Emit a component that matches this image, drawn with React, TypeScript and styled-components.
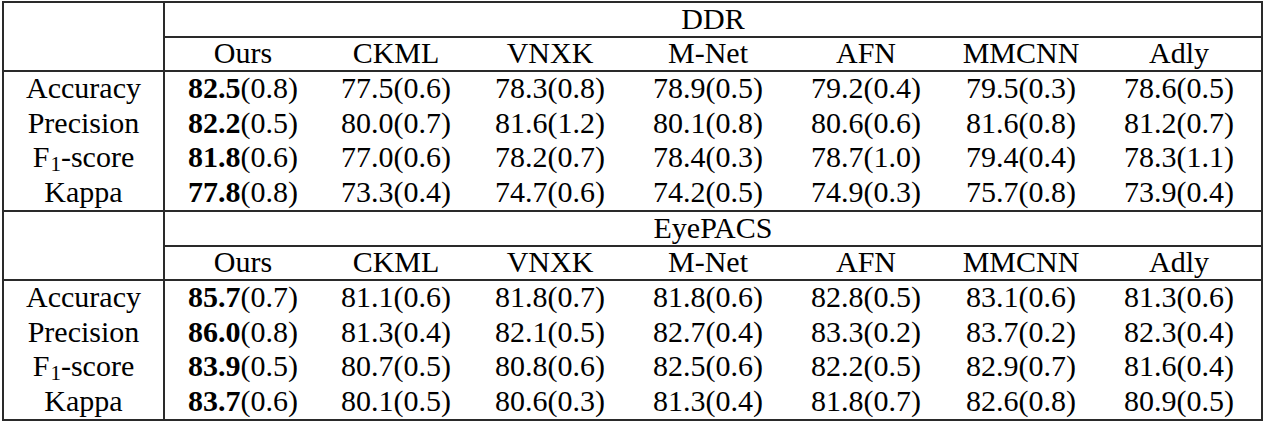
import React from "react";
import styled, { createGlobalStyle } from "styled-components";

const GlobalStyle = createGlobalStyle`
  html, body {
    margin: 0;
    padding: 0;
    background: #ffffff;
  }
  body {
    font-family: "Liberation Serif", "Times New Roman", serif;
    color: #000;
  }
`;

const LINE = "2px solid #2a2a2a";

const Page = styled.div`
  padding: 1px 0 0 2px;
`;

const Table = styled.table`
  width: 1261px;
  table-layout: fixed;
  border-collapse: separate;
  border-spacing: 0;
  border: ${LINE};
  font-family: "Liberation Serif", "Times New Roman", serif;
  font-size: 30px;
  color: #000;
`;

const Col = styled.col<{ $w: number }>`
  width: ${(p) => p.$w}px;
`;

const Row = styled.tr<{ $h: number }>`
  height: ${(p) => p.$h}px;
`;

const LabelCell = styled.td<{ $ruled?: boolean }>`
  box-sizing: border-box;
  padding: 0 0 2px 0;
  text-align: center;
  vertical-align: middle;
  white-space: nowrap;
  border-right: ${LINE};
  border-bottom: ${(p) => (p.$ruled ? LINE : "none")};
  line-height: 1;
`;

const GroupCell = styled.td`
  box-sizing: border-box;
  padding: 0 0 2px 0;
  text-align: center;
  vertical-align: middle;
  border-bottom: ${LINE};
  line-height: 1;
`;

const Cell = styled.td<{ $ruled?: boolean }>`
  box-sizing: border-box;
  padding: 0 0 2px 0;
  text-align: center;
  vertical-align: middle;
  white-space: nowrap;
  border-bottom: ${(p) => (p.$ruled ? LINE : "none")};
  line-height: 1;
`;

const Mean = styled.span<{ $best?: boolean }>`
  font-weight: ${(p) => (p.$best ? 700 : 400)};
`;

const Sub = styled.span`
  display: inline-block;
  font-size: 0.7em;
  line-height: 0.75;
  vertical-align: -0.2em;
  margin-left: 1px;
`;

const methods = ["Ours", "CKML", "VNXK", "M-Net", "AFN", "MMCNN", "Adly"];
const colWidths = [156, 150, 158, 158, 158, 152, 164];

type Section = {
  name: string;
  rows: { label: string; values: string[] }[];
};

const sections: Section[] = [
  {
    name: "DDR",
    rows: [
      { label: "Accuracy", values: ["82.5(0.8)", "77.5(0.6)", "78.3(0.8)", "78.9(0.5)", "79.2(0.4)", "79.5(0.3)", "78.6(0.5)"] },
      { label: "Precision", values: ["82.2(0.5)", "80.0(0.7)", "81.6(1.2)", "80.1(0.8)", "80.6(0.6)", "81.6(0.8)", "81.2(0.7)"] },
      { label: "F1", values: ["81.8(0.6)", "77.0(0.6)", "78.2(0.7)", "78.4(0.3)", "78.7(1.0)", "79.4(0.4)", "78.3(1.1)"] },
      { label: "Kappa", values: ["77.8(0.8)", "73.3(0.4)", "74.7(0.6)", "74.2(0.5)", "74.9(0.3)", "75.7(0.8)", "73.9(0.4)"] },
    ],
  },
  {
    name: "EyePACS",
    rows: [
      { label: "Accuracy", values: ["85.7(0.7)", "81.1(0.6)", "81.8(0.7)", "81.8(0.6)", "82.8(0.5)", "83.1(0.6)", "81.3(0.6)"] },
      { label: "Precision", values: ["86.0(0.8)", "81.3(0.4)", "82.1(0.5)", "82.7(0.4)", "83.3(0.2)", "83.7(0.2)", "82.3(0.4)"] },
      { label: "F1", values: ["83.9(0.5)", "80.7(0.5)", "80.8(0.6)", "82.5(0.6)", "82.2(0.5)", "82.9(0.7)", "81.6(0.4)"] },
      { label: "Kappa", values: ["83.7(0.6)", "80.1(0.5)", "80.6(0.3)", "81.3(0.4)", "81.8(0.7)", "82.6(0.8)", "80.9(0.5)"] },
    ],
  },
];

function Label({ text }: { text: string }) {
  if (text === "F1") {
    return (
      <>
        F<Sub>1</Sub>-score
      </>
    );
  }
  return <>{text}</>;
}

function Value({ text, best }: { text: string; best: boolean }) {
  const i = text.indexOf("(");
  return (
    <>
      <Mean $best={best}>{text.slice(0, i)}</Mean>
      {text.slice(i)}
    </>
  );
}

export default function App() {
  return (
    <Page>
      <GlobalStyle />
      <Table>
        <colgroup>
          <Col $w={161} />
          {methods.map((m, i) => (
            <Col key={m} $w={colWidths[i]} />
          ))}
        </colgroup>
        <tbody>
          {sections.map((s) => (
            <React.Fragment key={s.name}>
              <Row $h={35}>
                <LabelCell rowSpan={2} $ruled />
                <GroupCell colSpan={7}>{s.name}</GroupCell>
              </Row>
              <Row $h={34}>
                {methods.map((m) => (
                  <Cell key={m} $ruled>
                    {m}
                  </Cell>
                ))}
              </Row>
              {s.rows.map((r, ri) => {
                const last = ri === s.rows.length - 1;
                const ruled = last && s.name === "DDR";
                return (
                  <Row key={r.label} $h={ruled ? 36.5 : 34.5}>
                    <LabelCell $ruled={ruled}>
                      <Label text={r.label} />
                    </LabelCell>
                    {r.values.map((v, vi) => (
                      <Cell key={vi} $ruled={ruled}>
                        <Value text={v} best={vi === 0} />
                      </Cell>
                    ))}
                  </Row>
                );
              })}
            </React.Fragment>
          ))}
        </tbody>
      </Table>
    </Page>
  );
}
